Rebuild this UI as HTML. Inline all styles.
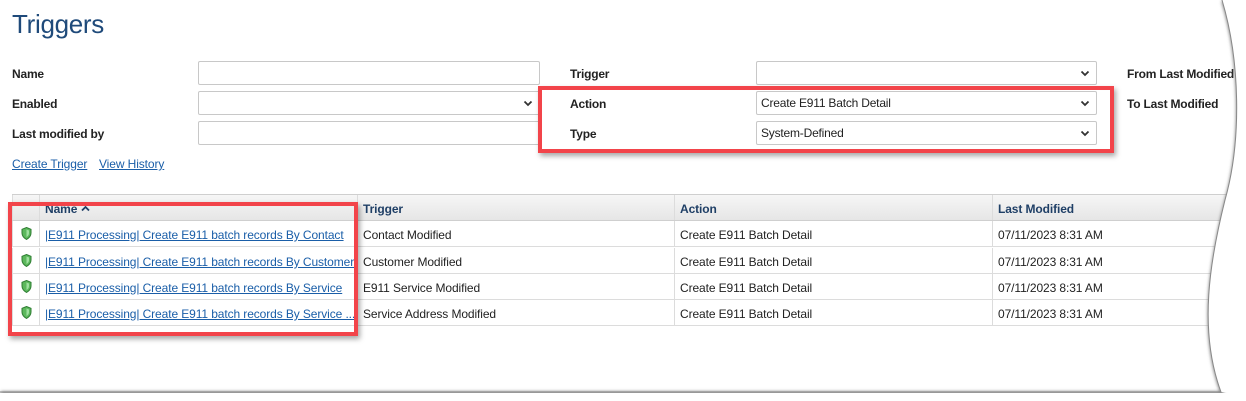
<!DOCTYPE html>
<html><head><meta charset="utf-8"><style>
*{margin:0;padding:0;box-sizing:border-box}
body{width:1246px;height:401px;background:#fff;position:relative;overflow:hidden;font-family:"Liberation Sans",sans-serif;font-size:12px;color:#222}
.a{position:absolute;white-space:nowrap}
.lbl{font-weight:bold;color:#222;font-size:12px;letter-spacing:-0.2px}
.in{position:absolute;border:1px solid #c8c8c8;border-radius:2px;background:#fff;height:24px;font-size:12px;padding:4px 4px;letter-spacing:-0.2px}
.chev{position:absolute;right:6px;top:6px;width:10px;height:10px}
.lnk{color:#1a5ea8;text-decoration:underline;letter-spacing:-0.1px}
.red{position:absolute;border:4px solid #f2444a;box-shadow:2px 3px 5px rgba(0,0,0,.35)}
.row{position:absolute;left:12px;width:1220px;height:26px;border-bottom:1px solid #dcdcdc}
.c{position:absolute;top:0;height:100%;border-left:1px solid #dcdcdc;padding:7px 5px;font-size:12px;letter-spacing:-0.1px;white-space:nowrap}
.hd .c{font-weight:bold;color:#1f3f66}
</style></head><body>
<div class="a" style="left:12px;top:9px;font-size:26px;color:#1f4a7a;letter-spacing:-0.3px">Triggers</div>

<div class="a lbl" style="left:12px;top:67px">Name</div>
<div class="a lbl" style="left:12px;top:97px">Enabled</div>
<div class="a lbl" style="left:12px;top:127px">Last modified by</div>
<div class="in" style="left:198px;top:61px;width:342px"></div>
<div class="in" style="left:198px;top:91px;width:342px"><svg class="chev" viewBox="0 0 10 10"><path d="M1.5 3.5L5 7 8.5 3.5" stroke="#333" stroke-width="1.8" fill="none"/></svg></div>
<div class="in" style="left:198px;top:121px;width:342px"></div>
<div class="a lnk" style="left:12px;top:157px">Create Trigger</div>
<div class="a lnk" style="left:99px;top:157px">View History</div>

<div class="a lbl" style="left:570px;top:67px">Trigger</div>
<div class="a lbl" style="left:570px;top:97px">Action</div>
<div class="a lbl" style="left:570px;top:127px">Type</div>
<div class="in" style="left:756px;top:61px;width:341px"><svg class="chev" viewBox="0 0 10 10"><path d="M1.5 3.5L5 7 8.5 3.5" stroke="#333" stroke-width="1.8" fill="none"/></svg></div>
<div class="in" style="left:756px;top:91px;width:341px">Create E911 Batch Detail<svg class="chev" viewBox="0 0 10 10"><path d="M1.5 3.5L5 7 8.5 3.5" stroke="#333" stroke-width="1.8" fill="none"/></svg></div>
<div class="in" style="left:756px;top:121px;width:341px">System-Defined<svg class="chev" viewBox="0 0 10 10"><path d="M1.5 3.5L5 7 8.5 3.5" stroke="#333" stroke-width="1.8" fill="none"/></svg></div>
<div class="a lbl" style="left:1127px;top:67px">From Last Modified</div>
<div class="a lbl" style="left:1127px;top:97px">To Last Modified</div>

<div class="row hd" style="top:194px;height:27px;background:linear-gradient(#f6f6f6,#e6e6e6);border-top:1px solid #cfcfcf;border-bottom:1px solid #cfcfcf">
<div class="c" style="left:0;width:27px;border-left:1px solid #dcdcdc"></div>
<div class="c" style="left:27px;width:318px">Name <svg width="9" height="7" viewBox="0 0 9 7" style="vertical-align:1px"><path d="M1 5.5L4.5 2 8 5.5" stroke="#1f3f66" stroke-width="1.8" fill="none"/></svg></div>
<div class="c" style="left:345px;width:317px">Trigger</div>
<div class="c" style="left:662px;width:318px">Action</div>
<div class="c" style="left:980px;width:240px">Last Modified</div>
</div>
<div class="row" style="top:221px">
<div class="c" style="left:0;width:27px;padding:6px 8px"><svg width="11" height="13" viewBox="0 0 11 13"><path d="M5.5 .5L10 2.3V6c0 3-2 5-4.5 6.5C3 11 1 9 1 6V2.3z" fill="#5cb85c" stroke="#2e7d32" stroke-width="1"/><path d="M5.5 2.5L8 3.5V6c0 2-1.2 3.2-2.5 4z" fill="#9fe09f"/></svg></div>
<div class="c" style="left:27px;width:318px"><span class="lnk">|E911 Processing| Create E911 batch records By Contact</span></div>
<div class="c" style="left:345px;width:317px">Contact Modified</div>
<div class="c" style="left:662px;width:318px">Create E911 Batch Detail</div>
<div class="c" style="left:980px;width:240px">07/11/2023 8:31 AM</div>
</div>
<div class="row" style="top:248px">
<div class="c" style="left:0;width:27px;padding:6px 8px"><svg width="11" height="13" viewBox="0 0 11 13"><path d="M5.5 .5L10 2.3V6c0 3-2 5-4.5 6.5C3 11 1 9 1 6V2.3z" fill="#5cb85c" stroke="#2e7d32" stroke-width="1"/><path d="M5.5 2.5L8 3.5V6c0 2-1.2 3.2-2.5 4z" fill="#9fe09f"/></svg></div>
<div class="c" style="left:27px;width:318px"><span class="lnk">|E911 Processing| Create E911 batch records By Customer</span></div>
<div class="c" style="left:345px;width:317px">Customer Modified</div>
<div class="c" style="left:662px;width:318px">Create E911 Batch Detail</div>
<div class="c" style="left:980px;width:240px">07/11/2023 8:31 AM</div>
</div>
<div class="row" style="top:274px">
<div class="c" style="left:0;width:27px;padding:6px 8px"><svg width="11" height="13" viewBox="0 0 11 13"><path d="M5.5 .5L10 2.3V6c0 3-2 5-4.5 6.5C3 11 1 9 1 6V2.3z" fill="#5cb85c" stroke="#2e7d32" stroke-width="1"/><path d="M5.5 2.5L8 3.5V6c0 2-1.2 3.2-2.5 4z" fill="#9fe09f"/></svg></div>
<div class="c" style="left:27px;width:318px"><span class="lnk">|E911 Processing| Create E911 batch records By Service</span></div>
<div class="c" style="left:345px;width:317px">E911 Service Modified</div>
<div class="c" style="left:662px;width:318px">Create E911 Batch Detail</div>
<div class="c" style="left:980px;width:240px">07/11/2023 8:31 AM</div>
</div>
<div class="row" style="top:300px">
<div class="c" style="left:0;width:27px;padding:6px 8px"><svg width="11" height="13" viewBox="0 0 11 13"><path d="M5.5 .5L10 2.3V6c0 3-2 5-4.5 6.5C3 11 1 9 1 6V2.3z" fill="#5cb85c" stroke="#2e7d32" stroke-width="1"/><path d="M5.5 2.5L8 3.5V6c0 2-1.2 3.2-2.5 4z" fill="#9fe09f"/></svg></div>
<div class="c" style="left:27px;width:318px"><span class="lnk">|E911 Processing| Create E911 batch records By Service ...</span></div>
<div class="c" style="left:345px;width:317px">Service Address Modified</div>
<div class="c" style="left:662px;width:318px">Create E911 Batch Detail</div>
<div class="c" style="left:980px;width:240px">07/11/2023 8:31 AM</div>
</div>

<div class="red" style="left:538px;top:86px;width:576px;height:67px"></div>
<div class="red" style="left:8px;top:202px;width:350px;height:134px"></div>

<svg class="a" style="left:0;top:0" width="1246" height="401" viewBox="0 0 1246 401">
<defs><filter id="sh" x="-5%" y="-5%" width="110%" height="110%"><feGaussianBlur stdDeviation="1.5"/></filter></defs>
<path d="M1222 0 C1240 60,1242 140,1225 200 C1210 260,1198 330,1221 392 L0 392" fill="none" stroke="#777" stroke-width="3" filter="url(#sh)" transform="translate(1,1)"/>
<path d="M1222 0 C1240 60,1242 140,1225 200 C1210 260,1198 330,1221 392 L1246 392 L1246 0Z" fill="#fff"/>
<rect x="0" y="393" width="1246" height="8" fill="#fff"/>
<path d="M1222 0 C1240 60,1242 140,1225 200 C1210 260,1198 330,1221 392 L0 392" fill="none" stroke="#888" stroke-width="1"/>
</svg>
</body></html>
